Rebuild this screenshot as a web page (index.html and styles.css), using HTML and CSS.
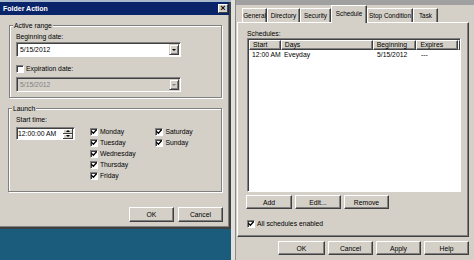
FILE: index.html
```html
<!DOCTYPE html>
<html lang="en">
<head>
	<meta charset="UTF-8">
	<title>Folder Action</title>
	<link rel="stylesheet" href="styles.css">
</head>
<body>
	<div class="screen">
		<div class="left">
			<div class="top-strip"></div>
			<div class="dialog">
				<div class="titlebar">
					<span>Folder Action</span>
					<span class="close">&times;</span>
				</div>
				<div class="dlg-body">
					<div class="group range">
						<span class="group-title">Active range</span>
						<div class="lbl">Beginning date:</div>
						<div class="combo"><span>5/15/2012</span><span class="drop"></span></div>
						<div class="check-row"><span class="cb"></span>Expiration date:</div>
						<div class="combo disabled"><span>5/15/2012</span><span class="drop"></span></div>
					</div>

					<div class="group launch">
						<span class="group-title">Launch</span>
						<div class="launch-time">
							<div class="lbl">Start time:</div>
							<div class="spin">
								<span>12:00:00 AM</span>
								<span class="spin-btns"><span class="up"></span><span class="down"></span></span>
							</div>
						</div>
						<div class="days">
							<div class="check-row day"><span class="cb"><svg viewBox="0 0 6 6"><path d="M0.8 2.6l1.6 1.7 2.9-3.3"/></svg></span>Monday</div>
							<div class="check-row day"><span class="cb"><svg viewBox="0 0 6 6"><path d="M0.8 2.6l1.6 1.7 2.9-3.3"/></svg></span>Tuesday</div>
							<div class="check-row day"><span class="cb"><svg viewBox="0 0 6 6"><path d="M0.8 2.6l1.6 1.7 2.9-3.3"/></svg></span>Wednesday</div>
							<div class="check-row day"><span class="cb"><svg viewBox="0 0 6 6"><path d="M0.8 2.6l1.6 1.7 2.9-3.3"/></svg></span>Thursday</div>
							<div class="check-row day"><span class="cb"><svg viewBox="0 0 6 6"><path d="M0.8 2.6l1.6 1.7 2.9-3.3"/></svg></span>Friday</div>
						</div>
						<div class="days">
							<div class="check-row day"><span class="cb"><svg viewBox="0 0 6 6"><path d="M0.8 2.6l1.6 1.7 2.9-3.3"/></svg></span>Saturday</div>
							<div class="check-row day"><span class="cb"><svg viewBox="0 0 6 6"><path d="M0.8 2.6l1.6 1.7 2.9-3.3"/></svg></span>Sunday</div>
						</div>
					</div>

					<div class="btn-row">
						<button class="btn">OK</button>
						<button class="btn">Cancel</button>
					</div>
				</div>
			</div>
			<div class="desktop"></div>
		</div>

		<div class="seam"></div>

		<div class="right">
			<div class="right-top"></div>
			<div class="tabs">
				<span class="tab w-general">General</span>
				<span class="tab w-directory">Directory</span>
				<span class="tab w-security">Security</span>
				<span class="tab sel w-schedule">Schedule</span>
				<span class="tab w-stop">Stop Condition</span>
				<span class="tab w-task">Task</span>
			</div>
			<div class="panel">
				<div class="lbl">Schedules:</div>
				<div class="list">
					<div class="list-head">
						<span class="c-start">Start</span>
						<span class="c-days">Days</span>
						<span class="c-begin">Beginning</span>
						<span class="c-exp">Expires</span>
						<span class="c-fill"></span>
					</div>
					<div class="list-row">
						<span class="c-start">12:00 AM</span>
						<span class="c-days">Eveyday</span>
						<span class="c-begin">5/15/2012</span>
						<span class="c-exp">---</span>
					</div>
				</div>
				<div class="panel-btns">
					<button class="btn b-add">Add</button>
					<button class="btn b-edit">Edit...</button>
					<button class="btn b-remove">Remove</button>
				</div>
				<div class="check-row all-row"><span class="cb"><svg viewBox="0 0 6 6"><path d="M0.8 2.6l1.6 1.7 2.9-3.3"/></svg></span>All schedules enabled</div>
			</div>
			<div class="bottom-btns">
				<button class="btn b-ok">OK</button>
				<button class="btn">Cancel</button>
				<button class="btn">Apply</button>
				<button class="btn">Help</button>
			</div>
		</div>
	</div>
</body>
</html>
```

FILE: styles.css
```css
* { box-sizing: border-box; }

body {
	margin     : 0;
	font-family: 'Liberation Sans', Arial, sans-serif;
	font-size  : 6.8px;
	color      : #000;
	background : #d4d0c8;
}

.screen {
	display : flex;
	width   : 474px;
	height  : 260px;
	overflow: hidden;
}

/* left dialog */
.left {
	width         : 231px;
	display       : flex;
	flex-direction: column;
}

.top-strip {
	height    : 2px;
	background: #a9b9cc;
}

.dialog {
	height        : 227px;
	display       : flex;
	flex-direction: column;
	background    : #d4d0c8;
	border-right  : 2px solid #404040;
	border-bottom : 2px solid #404040;
	box-shadow    : inset -1px -1px 0 #808080;
}

.titlebar {
	height         : 13px;
	display        : flex;
	align-items    : center;
	justify-content: space-between;
	padding        : 0 1px 0 3px;
	background     : #0a246a;
	color          : #fff;
	font-size      : 7px;
	font-weight    : bold;
}

.close {
	width       : 10px;
	height      : 9px;
	border      : 1px solid;
	border-color: #fff #404040 #404040 #fff;
	background  : #d4d0c8;
	color       : #000;
	font-size   : 9px;
	line-height : 6px;
	text-align  : center;
}

.dlg-body {
	flex          : 1;
	display       : flex;
	flex-direction: column;
}

.group {
	position  : relative;
	border    : 1px solid #808080;
	box-shadow: 1px 1px 0 #fff, inset 1px 1px 0 #fff;
}

.group-title {
	position   : absolute;
	top        : -5px;
	left       : 3px;
	padding    : 0 1px;
	line-height: 9px;
	background : #d4d0c8;
}

.lbl {
	height     : 9px;
	line-height: 9px;
}

.range {
	width  : 213px;
	height : 73px;
	margin : 10px 0 0 9px;
	padding: 6px 0 0 6px;
}

.combo {
	width          : 165px;
	height         : 15px;
	margin-top     : 1px;
	display        : flex;
	align-items    : center;
	justify-content: space-between;
	padding        : 0 1px 0 3px;
	background     : #fff;
	border         : 1px solid;
	border-color   : #808080 #fff #fff #808080;
	box-shadow     : inset 1px 1px 0 #404040;
}

.range .combo.disabled { margin-top: 4px; }

.combo.disabled {
	background: #d4d0c8;
	color     : #808080;
}

.drop {
	width          : 10px;
	height         : 11px;
	display        : flex;
	align-items    : center;
	justify-content: center;
	background     : #d4d0c8;
	border         : 1px solid;
	border-color   : #d4d0c8 #404040 #404040 #d4d0c8;
	box-shadow     : inset 1px 1px 0 #fff, inset -1px -1px 0 #808080;
}

.drop::after {
	content     : '';
	border-left : 2px solid transparent;
	border-right: 2px solid transparent;
	border-top  : 2px solid #000;
}

.disabled .drop::after { border-top-color: #808080; }

.check-row {
	height     : 9px;
	display    : flex;
	align-items: center;
	white-space: nowrap;
}

.range .check-row { margin-top: 7px; }

.cb {
	width          : 8px;
	height         : 8px;
	margin-right   : 2px;
	display        : flex;
	align-items    : center;
	justify-content: center;
	flex-shrink    : 0;
	background     : #fff;
	border         : 1px solid;
	border-color   : #808080 #fff #fff #808080;
	box-shadow     : inset 1px 1px 0 #404040;
}

.cb svg {
	width  : 6px;
	height : 6px;
	display: block;
}

.cb path {
	fill          : none;
	stroke        : #000;
	stroke-width  : 1.3;
	stroke-linecap: square;
}

.launch {
	width       : 214px;
	height      : 84px;
	margin      : 10px 0 0 8px;
	display     : flex;
	padding-left: 7px;
}

.launch-time {
	width      : 80px;
	padding-top: 6px;
}

.spin {
	width          : 59px;
	height         : 13px;
	margin-top     : 3px;
	display        : flex;
	align-items    : center;
	justify-content: space-between;
	padding        : 0 1px;
	background     : #fff;
	border         : 1px solid;
	border-color   : #808080 #fff #fff #808080;
	box-shadow     : inset 1px 1px 0 #404040;
}

.spin-btns {
	width         : 10px;
	height        : 10px;
	display       : flex;
	flex-direction: column;
}

.spin-btns span {
	flex           : 1;
	display        : flex;
	align-items    : center;
	justify-content: center;
	background     : #d4d0c8;
	border-right   : 1px solid #404040;
	border-bottom  : 1px solid #404040;
	box-shadow     : inset 1px 1px 0 #fff;
}

.spin-btns span::after {
	content     : '';
	border-left : 2px solid transparent;
	border-right: 2px solid transparent;
}

.spin-btns .up::after { border-bottom: 2px solid #000; }
.spin-btns .down::after { border-top: 2px solid #000; }

.days {
	width      : 71px;
	padding-top: 17px;
}

.day { height: 11px; }

.btn-row {
	display        : flex;
	justify-content: flex-end;
	gap            : 4px;
	margin-top     : 15px;
	padding-right  : 6px;
}

.btn {
	width          : 45px;
	height         : 15px;
	padding        : 0;
	display        : flex;
	align-items    : center;
	justify-content: center;
	font           : inherit;
	color          : #000;
	background     : #d4d0c8;
	border         : 1px solid;
	border-color   : #fff #404040 #404040 #fff;
	box-shadow     : inset -1px -1px 0 #808080;
}

.desktop {
	flex      : 1;
	background: #1b5b7b;
}

.seam {
	width       : 5px;
	background  : #e2e0db;
	border-right: 1px solid #8a8a8a;
}

/* right property window */
.right {
	flex          : 1;
	display       : flex;
	flex-direction: column;
	background    : #d4d0c8;
}

.right-top {
	height    : 5px;
	background: #a0a0a0;
}

.tabs {
	position    : relative;
	z-index     : 1;
	height      : 17px;
	display     : flex;
	align-items : flex-end;
	padding-left: 6px;
	font-size   : 6.4px;
}

.tab {
	height         : 14px;
	display        : flex;
	align-items    : center;
	justify-content: center;
	white-space    : nowrap;
	overflow       : visible;
	border-top     : 1px solid #fff;
	border-left    : 1px solid #fff;
	border-right   : 1px solid #404040;
	box-shadow     : inset -1px 0 0 #808080;
	background     : #d4d0c8;
}

.tab.sel {
	height        : 18px;
	margin-bottom : -1px;
	padding-bottom: 2px;
}

.w-general   { width: 25px; }
.w-directory { width: 33px; }
.w-security  { width: 31px; }
.w-schedule  { width: 36px; }
.w-stop      { width: 46px; }
.w-task      { width: 25px; }

.panel {
	width       : 232px;
	height      : 215px;
	margin-left : 1px;
	padding     : 6px 0 0 9px;
	border      : 1px solid;
	border-color: #fff #404040 #404040 #fff;
	box-shadow  : inset -1px -1px 0 #808080;
}

.list {
	width       : 214px;
	height      : 154px;
	padding     : 1px 0 0 1px;
	background  : #fff;
	border      : 1px solid;
	border-color: #808080 #fff #fff #808080;
	box-shadow  : inset 1px 1px 0 #404040;
	overflow    : hidden;
}

.list-head, .list-row { display: flex; }

.list-head span {
	height      : 10px;
	padding-left: 3px;
	line-height : 8px;
	white-space : nowrap;
	background  : #d4d0c8;
	border      : 1px solid;
	border-color: #fff #404040 #404040 #fff;
	box-shadow  : inset -1px -1px 0 #808080;
}

.list-row span {
	height      : 10px;
	padding-left: 3px;
	line-height : 10px;
	white-space : nowrap;
}

.c-start { width: 32px; }
.c-days  { width: 93px; }
.c-begin { width: 44px; }
.c-exp   { width: 42px; }
.list-head .c-fill { flex: 1; padding: 0; }

.panel-btns {
	display: flex;
	gap    : 3px;
	margin : 3px 0 0 -1px;
}

.panel-btns .btn { height: 14px; }
.b-add, .b-edit { width: 46px; }

.all-row { margin-top: 10px; }

.bottom-btns {
	display        : flex;
	justify-content: flex-end;
	gap            : 3px;
	margin-top     : 4px;
	padding-right  : 5px;
}

.bottom-btns .btn { height: 14px; }
.b-ok { width: 47px; }
```
